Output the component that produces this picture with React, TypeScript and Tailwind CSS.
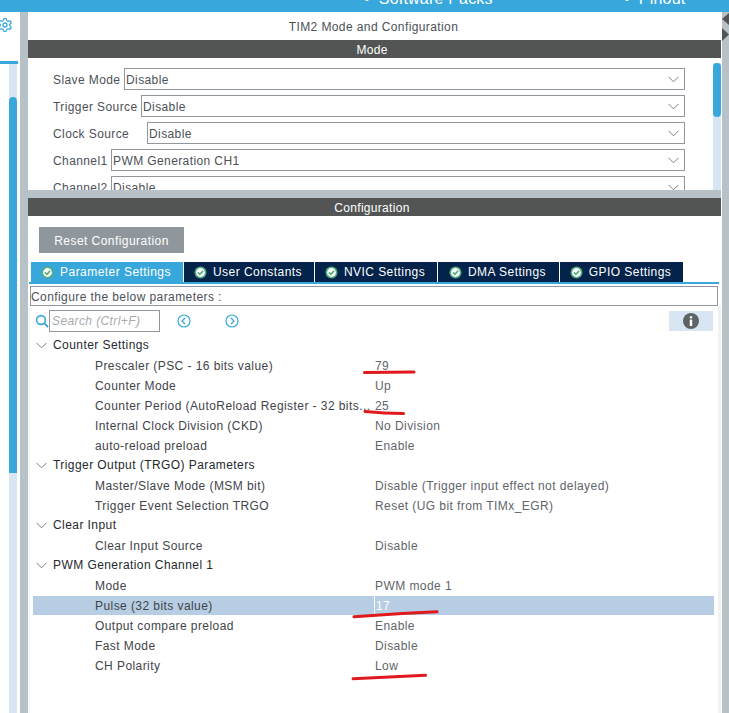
import { Settings } from 'lucide-react';

const modeRows = [
  { label: 'Slave Mode', value: 'Disable', labelW: 'w-[71px]' },
  { label: 'Trigger Source', value: 'Disable', labelW: 'w-[88px]' },
  { label: 'Clock Source', value: 'Disable', labelW: 'w-[94px]' },
  { label: 'Channel1', value: 'PWM Generation CH1', labelW: 'w-[58px]' },
  { label: 'Channel2', value: 'Disable', labelW: 'w-[58px]' },
];

const tabs = [
  { label: 'Parameter Settings', width: 'w-[153px]', active: true },
  { label: 'User Constants', width: 'w-[131px]', active: false },
  { label: 'NVIC Settings', width: 'w-[123px]', active: false },
  { label: 'DMA Settings', width: 'w-[122px]', active: false },
  { label: 'GPIO Settings', width: 'w-[124px]', active: false },
];

const groups = [
  {
    title: 'Counter Settings',
    rows: [
      ['Prescaler (PSC - 16 bits value)', '79'],
      ['Counter Mode', 'Up'],
      ['Counter Period (AutoReload Register - 32 bits...', '25'],
      ['Internal Clock Division (CKD)', 'No Division'],
      ['auto-reload preload', 'Enable'],
    ],
  },
  {
    title: 'Trigger Output (TRGO) Parameters',
    rows: [
      ['Master/Slave Mode (MSM bit)', 'Disable (Trigger input effect not delayed)'],
      ['Trigger Event Selection TRGO', 'Reset (UG bit from TIMx_EGR)'],
    ],
  },
  {
    title: 'Clear Input',
    rows: [['Clear Input Source', 'Disable']],
  },
  {
    title: 'PWM Generation Channel 1',
    rows: [
      ['Mode', 'PWM mode 1'],
      ['Pulse (32 bits value)', '17'],
      ['Output compare preload', 'Enable'],
      ['Fast Mode', 'Disable'],
      ['CH Polarity', 'Low'],
    ],
  },
];

const CheckBadge = () => (
  <svg width="13" height="13" viewBox="0 0 13 13" className="shrink-0">
    <circle cx="6.5" cy="6.5" r="6" fill="#4fae7c" />
    <circle cx="6.5" cy="6.5" r="4.4" fill="#ffffff" />
    <path d="M3.9 6.4 L5.9 8.4 L9.1 4.9" fill="none" stroke="#4fae7c" strokeWidth="1.6" />
  </svg>
);

const RoundArrow = ({ d }: { d: string }) => (
  <svg width="14" height="14" viewBox="0 0 14 14">
    <circle cx="7" cy="7" r="6" fill="none" stroke="#38a8dc" strokeWidth="1.2" />
    <path d={d} fill="none" stroke="#38a8dc" strokeWidth="1.3" />
  </svg>
);

// thin grey chevron, used for the tree and the select boxes
const Caret = () => (
  <svg width="11" height="7" viewBox="0 0 11 7" className="shrink-0">
    <path d="M0.5 0.8 L5.5 5.8 L10.5 0.8" fill="none" stroke="#7d8388" strokeWidth="1" />
  </svg>
);

export default function App() {
  return (
    <div className="relative flex h-[713px] w-[729px] flex-col overflow-hidden bg-white font-['Liberation_Sans',sans-serif] text-[12px] text-[#4c5157]">
      {/* Top bar, cut off by the crop */}
      <div className="flex h-3 shrink-0 items-start overflow-hidden bg-[#38a8dc] pl-[364px] text-[16px] leading-[16px] tracking-[0.2px] text-white">
        <span className="mt-[-9px] flex w-[260px] gap-[9px]">
          <span>•</span>
          <span>Software Packs</span>
        </span>
        <span className="mt-[-9px] flex gap-[9px]">
          <span>•</span>
          <span>Pinout</span>
        </span>
      </div>

      <div className="flex min-h-0 flex-1">
        {/* Left strip */}
        <div className="flex w-5 shrink-0 flex-col">
          <div className="h-[49px] shrink-0 overflow-hidden pt-[5px]">
            <Settings size={16} strokeWidth={2} className="ml-[-3px] text-[#38a8dc]" />
          </div>
          <div className="h-[3px] w-[18px] shrink-0 bg-[#38a8dc]" />
          <div className="ml-[9px] w-2 flex-1 bg-[#d8e6f3] pt-[33px]">
            <div className="h-[376px] rounded-t-[4px] bg-[#38a8dc]" />
          </div>
        </div>
        <div className="w-2 shrink-0 bg-[#b6c2c8]" />

        {/* Main column */}
        <div className="flex w-[693px] shrink-0 flex-col">
          <div className="flex h-7 shrink-0 items-center justify-center pr-[2px] pt-[2px] tracking-[0.4px]">
            TIM2 Mode and Configuration
          </div>
          <div className="flex h-[18px] shrink-0 items-center justify-center bg-[#535554] pr-[5px] pt-[1px] tracking-[0.3px] text-white">
            Mode
          </div>

          {/* Mode pane */}
          <div className="flex h-[132px] shrink-0">
            <div className="flex w-[657px] shrink-0 flex-col gap-[5px] overflow-hidden pl-[25px] pt-[10px]">
              {modeRows.map((row) => (
                <div key={row.label} className="flex h-[22px] shrink-0 items-center">
                  <span className={`${row.labelW} shrink-0 whitespace-nowrap pt-[2px] tracking-[0.4px]`}>
                    {row.label}
                  </span>
                  <div className="flex h-[22px] flex-1 items-center justify-between border border-[#91979c] pl-[1px] pr-[5px]">
                    <span className="pt-[2px] tracking-[0.4px]">{row.value}</span>
                    <Caret />
                  </div>
                </div>
              ))}
            </div>
            <div className="ml-[28px] mt-[5px] w-2 bg-[#d8e6f3]">
              <div className="h-[54px] rounded-[4px] bg-[#38a8dc]" />
            </div>
          </div>

          <div className="h-2 shrink-0 bg-[#b6c2c8]" />
          <div className="flex h-[18px] shrink-0 items-center justify-center bg-[#535554] pr-[5px] pt-[1px] tracking-[0.3px] text-white">
            Configuration
          </div>

          <div className="px-[11px] pt-[11px]">
            <div className="flex h-[26px] w-[145px] items-center justify-center bg-[#8f979d] pt-[1px] tracking-[0.45px] text-white">
              Reset Configuration
            </div>
          </div>

          {/* Tabs */}
          <div className="ml-[3px] mt-[9px] flex h-[20px] shrink-0">
            {tabs.map((tab) => (
              <div
                key={tab.label}
                className={`${tab.width} flex h-5 shrink-0 items-center justify-center gap-[6px] border-r border-white pr-[2px] tracking-[0.45px] text-white ${
                  tab.active ? 'bg-[#38a8dc]' : 'bg-[#04234a]'
                }`}
              >
                <CheckBadge />
                <span className="whitespace-nowrap">{tab.label}</span>
              </div>
            ))}
          </div>
          <div className="ml-[1px] h-[2px] w-[690px] shrink-0 bg-[#38a8dc]" />

          <div className="ml-[2px] mt-[2px] flex h-5 w-[688px] shrink-0 items-center border border-[#91979c] pt-[2px] tracking-[0.42px]">
            Configure the below parameters :
          </div>

          {/* Scroll pane with search row and parameter tree */}
          <div className="ml-px flex flex-1 flex-col border-l border-r-[3px] border-[#f1f2f4]">
            <div className="flex h-[26px] shrink-0 items-center pl-[5px] pt-[4px]">
              <svg width="14" height="14" viewBox="0 0 14 14" className="shrink-0">
                <circle cx="6" cy="6" r="4.4" fill="none" stroke="#38a8dc" strokeWidth="1.6" />
                <path d="M9.2 9.2 L13 13" stroke="#38a8dc" strokeWidth="1.8" />
              </svg>
              <div className="flex h-[22px] w-[111px] shrink-0 items-center border border-[#91979c] pl-[2px] italic tracking-[0.4px] text-[#a6abaf]">
                Search (Ctrl+F)
              </div>
              <div className="ml-[17px] flex w-[62px] shrink-0 justify-between">
                <RoundArrow d="M8 4 L5 7 L8 10" />
                <RoundArrow d="M6 4 L9 7 L6 10" />
              </div>
              <div className="ml-[430px] flex h-5 w-11 shrink-0 items-center justify-center bg-[#d8e6f3]">
                <svg width="16" height="16" viewBox="0 0 16 16">
                  <circle cx="8" cy="8" r="8" fill="#5f6366" />
                  <rect x="6.8" y="6.6" width="2.4" height="6.4" fill="#ffffff" />
                  <rect x="6.8" y="3.2" width="2.4" height="2.2" fill="#ffffff" />
                </svg>
              </div>
            </div>

            <div className="mt-[3px] flex flex-col">
              {groups.map((group) => (
                <div key={group.title} className="flex flex-col">
                  <div className="flex h-5 items-center gap-[6px] pl-[6px] tracking-[0.43px] text-[#25292d]">
                    <Caret />
                    <span>{group.title}</span>
                  </div>
                  {group.rows.map(([name, value]) => {
                    const selected = name.startsWith('Pulse');
                    return (
                      <div
                        key={name}
                        className={`ml-[3px] flex h-5 w-[681px] items-center pl-[62px] tracking-[0.43px] ${
                          selected ? 'border-t border-white bg-[#b7cde3]' : 'pt-[1px]'
                        }`}
                      >
                        <span className="w-[279px] shrink-0 whitespace-nowrap text-[#3f444a]">{name}</span>
                        <span
                          className={`flex h-full items-center whitespace-nowrap pl-[1px] ${
                            selected ? 'border-l border-white text-white' : 'text-[#5f646a]'
                          }`}
                        >
                          {value}
                        </span>
                      </div>
                    );
                  })}
                </div>
              ))}
            </div>
          </div>
        </div>

        <div className="ml-px w-[7px] shrink-0 bg-[#b6c2c8]" />
      </div>

      {/* Hand-drawn red annotations over the screenshot */}
      <svg width="729" height="713" className="pointer-events-none absolute left-0 top-0">
        <g fill="none" stroke="#e0191f" strokeWidth="3" strokeLinecap="round">
          <path d="M364.5 372.6 Q390 372 414 372" />
          <path d="M365 411.5 Q385 413.5 403.5 413.5" />
          <path d="M354 616.8 Q395 613.5 437 611.8" />
          <path d="M353 678.8 Q390 677 425.5 675.2" />
        </g>
      </svg>

      {/* Pane arrows on the right edge */}
      <svg width="8" height="30" viewBox="0 0 8 30" className="absolute right-0 top-[13px]">
        <path d="M8 0 L1 6 L8 12 Z" fill="#535554" />
        <path d="M1 15 L8 21.5 L1 28 Z" fill="#535554" />
      </svg>
    </div>
  );
}
